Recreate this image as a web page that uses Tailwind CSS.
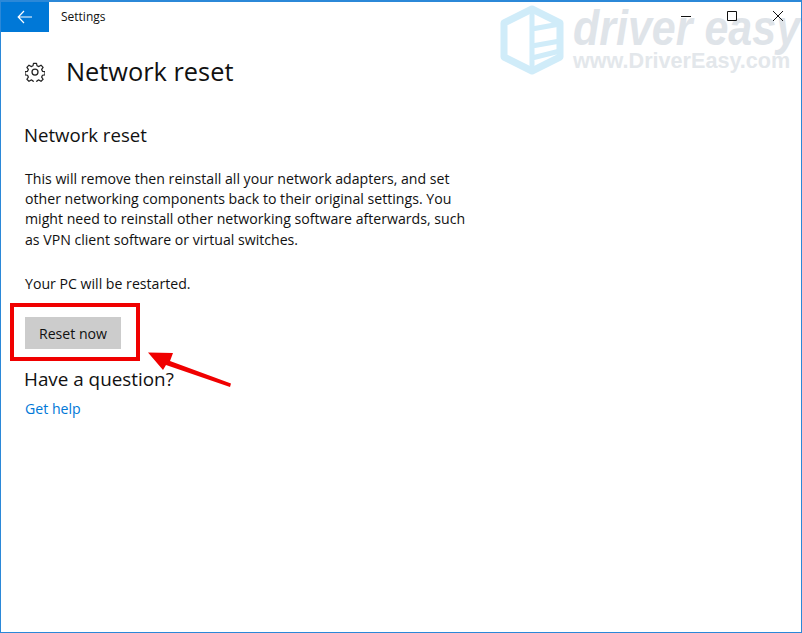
<!DOCTYPE html>
<html lang="en">
<head>
    <meta charset="UTF-8">
    <title>Network reset</title>
    <script src="https://cdn.jsdelivr.net/npm/@tailwindcss/browser@4"></script>
</head>
<body class="bg-white font-['Open_Sans',sans-serif] text-[#111]">
    <div class="relative w-[802px] h-[633px] overflow-hidden border border-t-2 border-[#2b88d8]">
        <!-- title bar -->
        <div class="flex items-center h-[30px]">
            <div class="flex items-center justify-center w-[48px] h-[30px] bg-[#0078d7]">
                <svg width="16" height="14" viewBox="0 0 16 14" fill="none" stroke="#fff" stroke-width="1.2"><path d="M7 1 1.2 7 7 13M1.2 7H15"/></svg>
            </div>
            <span class="ml-3 text-[12px] leading-none">Settings</span>
        </div>

        <div class="flex items-center h-[50px] mt-[15px] pl-[24px]">
            <svg width="20" height="20" viewBox="0 0 24 24" fill="none" stroke="#222" stroke-width="1.5" stroke-linejoin="round"><circle cx="12" cy="12" r="3.6"/><path d="M10.200 1.500h3.600l.6 3 2.200 1 2.600-1.700 2.500 2.600-1.700 2.500 1 2.300 3 .5v3.600l-3 .6-1 2.200 1.700 2.600-2.500 2.500-2.600-1.700-2.200 1-.6 3h-3.600l-.6-3-2.200-1-2.600 1.700-2.500-2.500 1.700-2.600-1-2.200-3-.6v-3.600l3-.5 1-2.300-1.700-2.500 2.500-2.600 2.600 1.700 2.200-1z"/></svg>
            <h1 class="ml-[21px] text-[25.350px] leading-none font-normal">Network reset</h1>
        </div>

        <div class="pl-[23px]">
            <h2 class="mt-[25px] text-[18.600px] leading-[26px] font-normal">Network reset</h2>
            <p class="mt-[21px] ml-px w-[450px] text-[14.130px] leading-[20.200px]">This will remove then reinstall all your network adapters, and set other networking components back to their original settings. You might need to reinstall other networking software afterwards, such as VPN client software or virtual switches.</p>
            <p class="mt-[24.500px] ml-px text-[14.130px] leading-[20px]">Your PC will be restarted.</p>
            <button class="block mt-[23px] ml-px w-[96px] h-[32px] bg-[#cccccc] text-[14.130px]">Reset now</button>
            <h2 class="mt-[17px] text-[18.850px] leading-[26px] font-normal">Have a question?</h2>
            <a class="block mt-[7px] ml-px text-[14.130px] leading-[20px] text-[#0078d7]">Get help</a>
        </div>

        <!-- watermark -->
        <div class="absolute top-0 left-[498px] flex gap-[8px] pointer-events-none">
            <svg class="mt-[2px]" width="66" height="72" viewBox="0 0 66 72" fill="none" stroke="#d0ecf9" stroke-width="7" stroke-linejoin="round"><path d="M33 5 61 19V53L33 67 5 53V19Z"/><path d="M33 5V67M33 25 61 20M33 42 61 37M33 54 61 47" stroke-width="5"/></svg>
            <div class="whitespace-nowrap">
                <div class="mt-[3px] origin-top scale-y-[1.15] font-['Liberation_Sans',sans-serif] font-bold italic text-[43px] leading-[40px] text-[#dfe4e9]">driver easy</div>
                <div class="mt-[4px] font-['Liberation_Sans',sans-serif] font-bold text-[21.600px] leading-[24px] text-[#e3e7eb]">www.DriverEasy.com</div>
            </div>
        </div>

        <!-- window buttons -->
        <div class="absolute top-[9px] right-[18px] flex items-center gap-[36px] z-10">
            <svg width="10" height="10" viewBox="0 0 10 10" stroke="#111"><path d="M0 5.500h10"/></svg>
            <svg width="10" height="10" viewBox="0 0 10 10" fill="none" stroke="#111"><path d="M.5.500h9v9h-9z"/></svg>
            <svg width="10" height="10" viewBox="0 0 10 10" stroke="#111"><path d="m0 0 10 10M10 0 0 10"/></svg>
        </div>

        <!-- annotation -->
        <div class="absolute left-[9px] top-[301px] w-[130px] h-[58px] border-[4px] border-[#f00000]"></div>
        <svg class="absolute left-[146px] top-[346px]" width="86" height="42" viewBox="0 0 86 42"><path d="M1 4.500 26 5 23 13 84 35.500 83 39 19 17 16 22Z" fill="#f00000"/></svg>
    </div>
</body>
</html>
